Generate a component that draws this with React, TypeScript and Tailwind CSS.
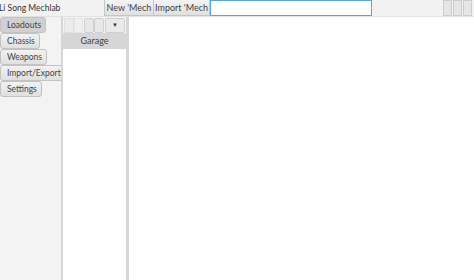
import React from 'react';

const topBtn =
    'h-[16px] flex items-center justify-center text-[9px] text-[#444] border border-t-0 border-[#c6c6c6] bg-gradient-to-b from-[#f4f4f4] to-[#e0e0e0] whitespace-nowrap';

const NavButton = ({ label, active }: { label: string; active?: boolean }) => (
    <div
        className={
            'h-[16px] flex items-center pl-[6px] pr-[4px] text-[8.5px] text-[#444] border border-[#c2c2c2] rounded-[3px] w-fit whitespace-nowrap ' +
            (active ? 'bg-[#d0d0d0]' : 'bg-gradient-to-b from-[#f2f2f2] to-[#e0e0e0]')
        }
    >
        {label}
    </div>
);

const App = () => {
    return (
        <div className="w-[474px] h-[280px] flex flex-col bg-white overflow-hidden" style={{ fontFamily: 'Lato, "Open Sans", sans-serif' }}>
            {/* top bar */}
            <div className="h-[17px] flex items-stretch bg-[#f2f2f2] border-b border-[#e2e2e2]">
                <div className="w-[105px] flex items-center text-[8.5px] text-[#333] -ml-[1px]">Li Song Mechlab</div>
                <div className={topBtn + ' w-[50px]'}>New 'Mech</div>
                <div className={topBtn + ' w-[56px] border-l-0'}>Import 'Mech</div>
                <div className="w-[162px] h-[16px] border border-[#55a8e0] bg-white"></div>
                <div className="flex-1"></div>
                <div className="flex gap-[1px] pr-[2px]">
                    <div className="w-[9px] h-[16px] bg-[#e6e6e6] border border-[#cdcdcd]"></div>
                    <div className="w-[9px] h-[16px] bg-[#e6e6e6] border border-[#cdcdcd]"></div>
                    <div className="w-[9px] h-[16px] bg-[#e6e6e6] border border-[#cdcdcd]"></div>
                </div>
            </div>
            <div className="flex-1 flex">
                {/* sidebar */}
                <div className="w-[61px] bg-[#f3f3f3] flex flex-col">
                    <NavButton label="Loadouts" active />
                    <NavButton label="Chassis" />
                    <NavButton label="Weapons" />
                    <NavButton label="Import/Export" />
                    <NavButton label="Settings" />
                </div>
                {/* middle panel */}
                <div className="w-[68px] flex flex-col border-l-[2px] border-r-[3px] border-[#d6d6d6] bg-white">
                    <div className="h-[16px] flex items-center bg-[#f4f4f4] px-[1px]">
                        <div className="w-[10px] h-[15px] bg-[#ececec] border border-[#e0e0e0]"></div>
                        <div className="w-[10px] h-[15px] bg-[#f0f0f0] border border-[#e6e6e6]"></div>
                        <div className="w-[10px] h-[15px] bg-[#e8e8e8] border border-[#d0d0d0] rounded-[2px] ml-[1px]"></div>
                        <div className="w-[10px] h-[15px] bg-[#e8e8e8] border border-[#d0d0d0] rounded-[2px]"></div>
                        <div className="w-[21px] h-[15px] bg-[#eaeaea] border border-[#d0d0d0] rounded-[2px] ml-[1px] flex items-center justify-center">
                            <span className="text-[6px] text-[#333] leading-none">▼</span>
                        </div>
                    </div>
                    <div className="h-[16px] bg-[#d6d6d6] flex items-center justify-center text-[9px] text-[#444]">Garage</div>
                    <div className="flex-1 bg-white"></div>
                </div>
                {/* content */}
                <div className="flex-1 bg-white"></div>
            </div>
        </div>
    );
};

export default App;
